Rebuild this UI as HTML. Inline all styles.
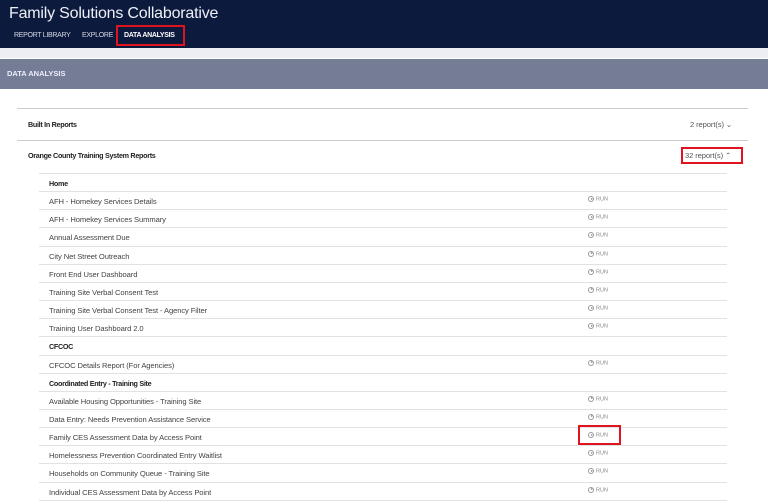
<!DOCTYPE html>
<html><head><style>
body{margin:0;width:768px;height:504px;overflow:hidden;font-family:"Liberation Sans",sans-serif;background:#fff;position:relative}
.hdr{position:absolute;left:0;top:0;width:768px;height:48px;background:#0c1a3e}
.title{position:absolute;left:9px;top:5px;color:#eef0f5;font-size:16px;letter-spacing:-0.2px}
.nav{position:absolute;top:32px;color:#d6d9e3;font-size:7px;letter-spacing:-0.3px}
.band{position:absolute;left:0;top:48px;width:768px;height:10px;background:#eceef3}
.bar{position:absolute;left:0;top:59px;width:768px;height:30px;background:#757d96;color:#eef;font-size:7.5px;font-weight:bold;line-height:30px;padding-left:7px;box-sizing:border-box}
.line{position:absolute;height:1px;background:#e2e2e2}
.t{position:absolute;font-size:7.6px;color:#444;letter-spacing:-0.1px}
.b{font-weight:bold;color:#222;font-size:7.2px;letter-spacing:-0.3px}
.run{position:absolute;left:588px;font-size:5.5px;color:#888}
.run span{display:inline-block;width:6px;height:6px;border:1px solid #999;border-radius:50%;vertical-align:middle;margin-right:2px;position:relative;box-sizing:border-box}
.run span:after{content:"";position:absolute;left:1.5px;top:0.5px;width:0;height:0;border-left:2.5px solid #888;border-top:1.5px solid transparent;border-bottom:1.5px solid transparent}
.red{position:absolute;border:2px solid #e0141e;box-sizing:border-box}
</style></head><body>
<div class="hdr"></div>
<div class="title">Family Solutions Collaborative</div>
<div class="nav" style="left:14px">REPORT LIBRARY</div>
<div class="nav" style="left:82px">EXPLORE</div>
<div class="nav" style="left:124px;color:#fff;font-weight:bold">DATA ANALYSIS</div>
<div class="red" style="left:116px;top:25px;width:69px;height:21px"></div>
<div class="band"></div>
<div class="bar">DATA ANALYSIS</div>
<div class="line" style="left:17px;top:108px;width:731px;background:#ccc"></div>
<div class="t b" style="left:28px;top:120px">Built In Reports</div>
<div class="t" style="left:690px;top:120px;color:#555">2 report(s) &#8964;</div>
<div class="line" style="left:17px;top:140px;width:731px;background:#ccc"></div>
<div class="t b" style="left:28px;top:151px">Orange County Training System Reports</div>
<div class="t" style="left:685px;top:151px;color:#555">32 report(s) &#8963;</div>
<div class="red" style="left:681px;top:147px;width:62px;height:17px"></div>
<div id="rows"></div>
<div class="red" style="left:578px;top:425px;width:43px;height:20px"></div>
<script>
var items=[["Home",1],["AFH - Homekey Services Details"],["AFH - Homekey Services Summary"],["Annual Assessment Due"],["City Net Street Outreach"],["Front End User Dashboard"],["Training Site Verbal Consent Test"],["Training Site Verbal Consent Test - Agency Filter"],["Training User Dashboard 2.0"],["CFCOC",1],["CFCOC Details Report (For Agencies)"],["Coordinated Entry - Training Site",1],["Available Housing Opportunities - Training Site"],["Data Entry: Needs Prevention Assistance Service"],["Family CES Assessment Data by Access Point"],["Homelessness Prevention Coordinated Entry Waitlist"],["Households on Community Queue - Training Site"],["Individual CES Assessment Data by Access Point"]];
var h="";
items.forEach(function(it,i){var y=174+i*18.15;
h+='<div class="line" style="left:39px;top:'+(y-1)+'px;width:688px"></div>';
h+='<div class="t'+(it[1]?' b':'')+'" style="left:49px;top:'+(y+5)+'px">'+it[0]+'</div>';
if(!it[1])h+='<div class="run" style="top:'+(y+4)+'px"><span></span>RUN</div>';});
h+='<div class="line" style="left:39px;top:'+(174+18*18.15-1)+'px;width:688px"></div>';
document.getElementById("rows").innerHTML=h;
</script>
</body></html>
